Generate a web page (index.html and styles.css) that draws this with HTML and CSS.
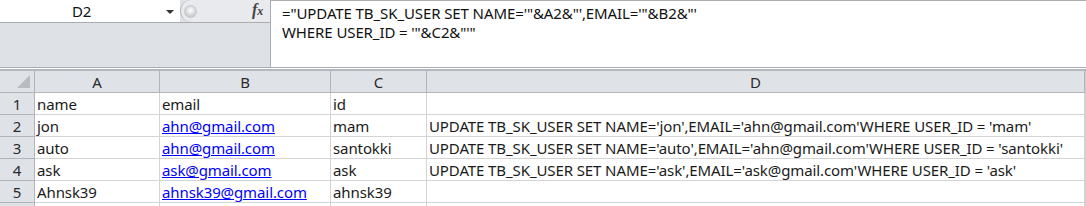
FILE: index.html
```html
<!DOCTYPE html>
<html>
<head>
<meta charset="utf-8">
<link rel="stylesheet" href="styles.css">
</head>
<body>
<div class="app">
  <div class="fbar">
    <div class="fleft">
      <div class="nrow">
        <div class="namebox"><span class="nbtext">D2</span><span class="arrow"></span></div>
        <div class="handle"><span class="dot"></span><span class="fx">f<span class="fxx">x</span></span></div>
      </div>
    </div>
    <div class="formula">
      <div class="fline">="UPDATE TB_SK_USER SET NAME='"&amp;A2&amp;"',EMAIL='"&amp;B2&amp;"'</div>
      <div class="fline">WHERE USER_ID = '"&amp;C2&amp;"'"</div>
    </div>
  </div>
  <div class="gap"></div>
  <div class="sheet">
    <div class="corner"><span class="tri"></span></div>
    <div class="ch">A</div><div class="ch">B</div><div class="ch">C</div><div class="ch">D</div>

    <div class="rh">1</div><div class="c">name</div><div class="c">email</div><div class="c">id</div><div class="c"></div>
    <div class="rh">2</div><div class="c">jon</div><div class="c"><a class="lnk">ahn@gmail.com</a></div><div class="c">mam</div><div class="c">UPDATE TB_SK_USER SET NAME='jon',EMAIL='ahn@gmail.com'WHERE USER_ID = 'mam'</div>
    <div class="rh">3</div><div class="c">auto</div><div class="c"><a class="lnk">ahn@gmail.com</a></div><div class="c">santokki</div><div class="c">UPDATE TB_SK_USER SET NAME='auto',EMAIL='ahn@gmail.com'WHERE USER_ID = 'santokki'</div>
    <div class="rh">4</div><div class="c">ask</div><div class="c"><a class="lnk">ask@gmail.com</a></div><div class="c">ask</div><div class="c">UPDATE TB_SK_USER SET NAME='ask',EMAIL='ask@gmail.com'WHERE USER_ID = 'ask'</div>
    <div class="rh">5</div><div class="c">Ahnsk39</div><div class="c"><a class="lnk">ahnsk39@gmail.com</a></div><div class="c">ahnsk39</div><div class="c"></div>
    <div class="rh"></div><div class="c"></div><div class="c"></div><div class="c"></div><div class="c"></div>
  </div>
</div>
</body>
</html>
```
FILE: styles.css
```css
html, body {
  margin: 0;
  padding: 0;
  background: #ffffff;
}
.app {
  width: 1086px;
  height: 206px;
  overflow: hidden;
  font-family: "Noto Sans", "Noto Sans CJK KR", sans-serif;
  font-size: 15px;
  letter-spacing: -0.1px;
  color: #1a1a1a;
}
.fbar {
  display: flex;
  height: 67px;
  border-bottom: 1px solid #a9adb2;
}
.fleft {
  width: 270px;
  background: #dee1e6;
  border-right: 1px solid #a9adb2;
}
.nrow {
  display: flex;
  height: 22px;
  border-bottom: 1px solid #a9adb2;
}
.namebox {
  width: 180px;
  background: #ffffff;
  position: relative;
  display: flex;
  align-items: center;
  padding-left: 72px;
  box-sizing: border-box;
}
.nbtext {
  font-size: 15px;
  color: #111;
}
.arrow {
  position: absolute;
  left: 166px;
  top: 10px;
  width: 0;
  height: 0;
  border-left: 4px solid transparent;
  border-right: 4px solid transparent;
  border-top: 4px solid #333;
}
.handle {
  flex: 1;
  background: #e8eaed;
  border-top-left-radius: 11px;
  border-bottom-left-radius: 11px;
  border-left: 1px solid #b5b9be;
  display: flex;
  align-items: center;
  position: relative;
}
.dot {
  width: 11px;
  height: 11px;
  border-radius: 50%;
  margin-left: 3px;
  background: radial-gradient(circle at 50% 40%, #ffffff 0%, #d0d3d7 60%, #b9bcc0 100%);
  border: 1px solid #c4c7cb;
}
.fx {
  position: absolute;
  left: 71px;
  top: 1px;
  font-family: "Liberation Serif", serif;
  font-style: italic;
  font-weight: bold;
  font-size: 16px;
  color: #444;
}
.fxx {
  font-size: 12px;
}
.formula {
  flex: 1;
  border-top: 1px solid #a9adb2;
  padding: 3px 0 0 11px;
  color: #111;
}
.fline {
  height: 19px;
  line-height: 19px;
  white-space: nowrap;
}
.gap {
  height: 1px;
  border-bottom: 2px solid #b4b8bd;
}
.sheet {
  display: grid;
  grid-template-columns: 35px 125px 171px 96px 658px;
  grid-auto-rows: 22px;
  border-right: 1px solid #cdd0d4;
  width: 1085px;
}
.corner, .ch, .rh {
  background: #dfe3e8;
  box-sizing: border-box;
  border-right: 1px solid #b1b5ba;
  border-bottom: 1px solid #b1b5ba;
  color: #2b2b2b;
  display: flex;
  align-items: center;
  justify-content: center;
}
.corner {
  position: relative;
}
.tri {
  position: absolute;
  right: 4px;
  bottom: 4px;
  width: 0;
  height: 0;
  border-left: 13px solid transparent;
  border-bottom: 13px solid #b8bcc1;
}
.rh {
  padding-top: 1px;
}
.c {
  box-sizing: border-box;
  border-right: 1px solid #d4d4d4;
  border-bottom: 1px solid #d4d4d4;
  padding-left: 2px;
  padding-top: 1px;
  white-space: nowrap;
  overflow: hidden;
  line-height: 21px;
}
.lnk {
  color: #0000ff;
  text-decoration: underline;
}
```
